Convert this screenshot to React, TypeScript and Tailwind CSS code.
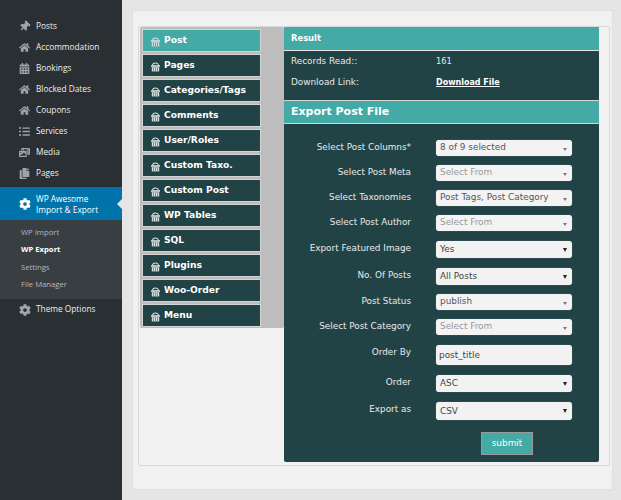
import { FaThumbtack, FaHome, FaCalendarAlt, FaListUl, FaPhotoVideo, FaCopy, FaCog } from "react-icons/fa";

const menu = [
  { label: "Posts", Icon: FaThumbtack, cls: "rotate-45" },
  { label: "Accommodation", Icon: FaHome, cls: "" },
  { label: "Bookings", Icon: FaCalendarAlt, cls: "" },
  { label: "Blocked Dates", Icon: FaHome, cls: "" },
  { label: "Coupons", Icon: FaHome, cls: "" },
  { label: "Services", Icon: FaListUl, cls: "" },
  { label: "Media", Icon: FaPhotoVideo, cls: "" },
  { label: "Pages", Icon: FaCopy, cls: "" },
];

const tabs = ["Post", "Pages", "Categories/Tags", "Comments", "User/Roles", "Custom Taxo.", "Custom Post", "WP Tables", "SQL", "Plugins", "Woo-Order", "Menu"];

type Row = { label: string; value: string; kind: "multi" | "placeholder" | "native" | "input"; h: string; fh: string };

const formRows: Row[] = [
  { label: "Select Post Columns*", value: "8 of 9 selected", kind: "multi", h: "h-[25px]", fh: "h-[16px]" },
  { label: "Select Post Meta", value: "Select From", kind: "placeholder", h: "h-[25px]", fh: "h-[16px]" },
  { label: "Select Taxonomies", value: "Post Tags, Post Category", kind: "multi", h: "h-[25px]", fh: "h-[16px]" },
  { label: "Select Post Author", value: "Select From", kind: "placeholder", h: "h-[26px]", fh: "h-[16px]" },
  { label: "Export Featured Image", value: "Yes", kind: "native", h: "h-[27px]", fh: "h-[17px]" },
  { label: "No. Of Posts", value: "All Posts", kind: "native", h: "h-[26px]", fh: "h-[17px]" },
  { label: "Post Status", value: "publish", kind: "multi", h: "h-[25px]", fh: "h-[16px]" },
  { label: "Select Post Category", value: "Select From", kind: "placeholder", h: "h-[26px]", fh: "h-[16px]" },
  { label: "Order By", value: "post_title", kind: "input", h: "h-[30px]", fh: "h-[20px]" },
  { label: "Order", value: "ASC", kind: "native", h: "h-[27px]", fh: "h-[17px]" },
  { label: "Export as", value: "CSV", kind: "native", h: "h-[27px]", fh: "h-[18px]" },
];

function BasketIcon() {
  return (
    <svg width="11" height="11" viewBox="0 0 11 11" className="shrink-0">
      <path d="M2.6 4.4C2.6 1.2 8.4 1.2 8.4 4.4" fill="none" stroke="#d8e0e0" strokeWidth="1.1" />
      <rect x="1" y="4.2" width="9" height="1.6" fill="#d8e0e0" />
      <path d="M1.8 6.2H9.2V10.4H1.8Z" fill="#d8e0e0" />
      <path d="M3.5 6.6V10M5.5 6.6V10M7.5 6.6V10" stroke="#5f7f80" strokeWidth="0.8" />
    </svg>
  );
}

function Field({ row }: { row: Row }) {
  if (row.kind === "native" || row.kind === "input") {
    return (
      <div className={`w-[136px] ${row.fh} bg-[#f2f2f2] rounded-[3px] flex items-center justify-between ${row.kind === "input" ? "pl-[3px]" : "pl-[4px]"} pr-[5px] text-[#444] text-[8.9px] shadow-[0_0_1px_#8a9a9a]`}>
        <span className="mt-[1px]">{row.value}</span>
        {row.kind === "native" && <span className="w-0 h-0 border-x-[2.5px] border-x-transparent border-t-[4px] border-t-[#222]" />}
      </div>
    );
  }
  return (
    <div className={`w-[136px] ${row.fh} bg-[#f3f3f3] rounded-[3px] flex items-center justify-between pl-[4px] pr-[5px] text-[8.9px] shadow-[0_0_1px_#8a9a9a]`}>
      <span className={row.kind === "placeholder" ? "text-[#999] -mt-[1px]" : "text-[#555] -mt-[1px]"}>{row.value}</span>
      <span className="w-0 h-0 border-x-[2px] border-x-transparent border-t-[3px] border-t-[#777] mt-[2px]" />
    </div>
  );
}

export default function App() {
  return (
    <div className="w-[621px] h-[500px] flex overflow-hidden bg-[#e5e5e5] font-['DejaVu_Sans',sans-serif]">
      <aside className="w-[122px] h-full shrink-0 bg-[#2a2f34] pt-[16px] font-['Open_Sans',sans-serif] text-[8.3px] text-[#eeeeee]">
        {menu.map(({ label, Icon, cls }) => (
          <div key={label} className="h-[21px] flex items-center">
            <span className="w-[36px] flex justify-center pl-[13px] text-[#9ea3a8]">
              <Icon size={11} className={cls} />
            </span>
            <span>{label}</span>
          </div>
        ))}
        <div className="relative mt-[3px] h-[33px] bg-[#0073aa] text-white flex items-center">
          <span className="w-[36px] flex justify-center pl-[13px]">
            <FaCog size={12} />
          </span>
          <span className="leading-[11px]">WP Awesome<br />Import &amp; Export</span>
          <span className="absolute right-0 top-[12px] w-0 h-0 border-y-[5px] border-y-transparent border-r-[5px] border-r-[#e5e5e5]" />
        </div>
        <div className="h-[79px] bg-[#393e43] pt-[4px] pl-[21px] text-[7.7px] text-[#b4b9be]">
          <div className="h-[17.5px] flex items-center">WP Import</div>
          <div className="h-[17.5px] flex items-center font-bold text-white">WP Export</div>
          <div className="h-[17.5px] flex items-center">Settings</div>
          <div className="h-[17.5px] flex items-center">File Manager</div>
        </div>
        <div className="h-[21px] flex items-center">
          <span className="w-[36px] flex justify-center pl-[13px] text-[#a0a5aa]">
            <FaCog size={12} />
          </span>
          <span>Theme Options</span>
        </div>
      </aside>

      <main className="flex-1 pl-[10px] pr-[8px] pt-[10px] pb-[10px]">
        <div className="h-[480px] bg-[#f1f1f1] border border-[#e0e0e0] pl-[5px] pr-[2px] pt-[15px]">
          <div className="h-[440px] border border-[#d9d9d9] rounded-[2px] flex items-start pl-[1px]">
            <nav className="w-[144px] h-[301px] shrink-0 bg-[#bdbdbd] rounded-[2px] pl-[2px] pt-[2px] flex flex-col gap-[2px]">
              {tabs.map((t, i) => (
                <div
                  key={t}
                  className={`w-[119px] h-[23px] flex items-center pt-[1px] pl-[7px] gap-[3px] font-bold text-[9.15px] text-white border border-[#d4d4d4] ${i === 0 ? "bg-[#43aaa6]" : "bg-[#214346]"}`}
                >
                  <BasketIcon />
                  <span>{t}</span>
                </div>
              ))}
            </nav>
            <section className="w-[315px] h-[435px] bg-[#214346] text-[#eaeaea] text-[8.85px] rounded-b-[2px]">
              <div className="h-[24px] bg-[#43aaa6] border-b border-[#e5e5e5] flex items-center pl-[7px] font-bold text-[8.4px] text-white">Result</div>
              <div className="h-[21px] flex items-center">
                <span className="w-[152px] pl-[7px]">Records Read::</span>
                <span className="text-[8.3px]">161</span>
              </div>
              <div className="h-[22px] flex items-center">
                <span className="w-[152px] pl-[7px]">Download Link:</span>
                <span className="text-[8px] font-bold text-white underline">Download File</span>
              </div>
              <div className="h-[24px] mt-[6px] bg-[#43aaa6] border-y border-[#d5d5d5] flex items-center pl-[7px] font-bold text-[11px] text-white">Export Post File</div>
              <div className="pt-[16px]">
                {formRows.map((r) => (
                  <div key={r.label} className={`${r.h} flex items-start`}>
                    <span className="w-[127px] text-right leading-[14px]">{r.label}</span>
                    <span className="ml-[25px]"><Field row={r} /></span>
                  </div>
                ))}
              </div>
              <div className="mt-[3px] flex pl-[197px]">
                <span className="w-[52px] h-[23px] bg-[#43aaa6] border border-[#9a9a9a] flex items-center justify-center text-[8.9px] text-white">submit</span>
              </div>
            </section>
          </div>
        </div>
      </main>
    </div>
  );
}
